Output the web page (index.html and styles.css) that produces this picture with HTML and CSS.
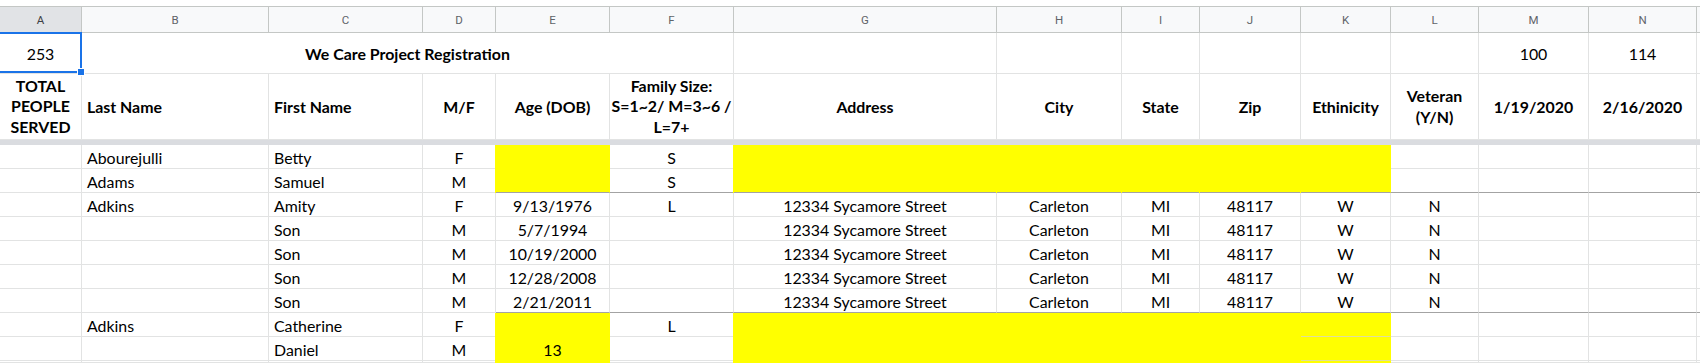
FILE: index.html
```html
<!DOCTYPE html>
<html>
<head>
<meta charset="utf-8">
<link rel="stylesheet" href="styles.css">
</head>
<body>
<div class="page">
  <div class="sheet">
    <!-- column headers -->
    <div class="h sel">A</div><div class="h">B</div><div class="h">C</div><div class="h">D</div><div class="h">E</div><div class="h">F</div><div class="h">G</div><div class="h">H</div><div class="h">I</div><div class="h">J</div><div class="h">K</div><div class="h">L</div><div class="h">M</div><div class="h">N</div><div class="h end"></div>

    <!-- row 1 -->
    <div class="c mid ctr a1">253<div class="selbox"><span class="handle"></span></div></div>
    <div class="c mid ctr b title">We Care Project Registration</div>
    <div class="c"></div><div class="c"></div><div class="c"></div><div class="c"></div><div class="c"></div><div class="c"></div>
    <div class="c mid ctr">100</div><div class="c mid ctr">114</div><div class="c end"></div>

    <!-- row 2 -->
    <div class="c mid ctr b wrap">TOTAL<br>PEOPLE<br>SERVED</div>
    <div class="c mid b">Last Name</div>
    <div class="c mid b">First Name</div>
    <div class="c mid ctr b">M/F</div>
    <div class="c mid ctr b">Age (DOB)</div>
    <div class="c mid ctr b wrap">Family Size:<br>S=1~2/ M=3~6 /<br>L=7+</div>
    <div class="c mid ctr b">Address</div>
    <div class="c mid ctr b">City</div>
    <div class="c mid ctr b">State</div>
    <div class="c mid ctr b">Zip</div>
    <div class="c mid ctr b">Ethinicity</div>
    <div class="c mid ctr b wrap">Veteran<br>(Y/N)</div>
    <div class="c mid ctr b">1/19/2020</div>
    <div class="c mid ctr b">2/16/2020</div>
    <div class="c end"></div>

    <div class="freeze"></div>

    <!-- row 3 -->
    <div class="c"></div><div class="c">Abourejulli</div><div class="c">Betty</div><div class="c ctr">F</div>
    <div class="c y"></div><div class="c ctr">S</div>
    <div class="c y"></div><div class="c y"></div><div class="c y"></div><div class="c y"></div><div class="c y"></div>
    <div class="c"></div><div class="c"></div><div class="c"></div><div class="c end"></div>

    <!-- row 4 -->
    <div class="c"></div><div class="c">Adams</div><div class="c">Samuel</div><div class="c ctr">M</div>
    <div class="c y dk"></div><div class="c ctr dk">S</div>
    <div class="c y dk"></div><div class="c y dk"></div><div class="c y dk"></div><div class="c y dk"></div><div class="c y dk"></div>
    <div class="c dk"></div><div class="c dk"></div><div class="c dk"></div><div class="c end dk"></div>

    <!-- row 5 -->
    <div class="c"></div><div class="c">Adkins</div><div class="c">Amity</div><div class="c ctr">F</div>
    <div class="c ctr">9/13/1976</div><div class="c ctr">L</div>
    <div class="c ctr">12334 Sycamore Street</div><div class="c ctr">Carleton</div><div class="c ctr">MI</div><div class="c ctr">48117</div><div class="c ctr">W</div>
    <div class="c ctr">N</div><div class="c"></div><div class="c"></div><div class="c end"></div>

    <!-- row 6 -->
    <div class="c"></div><div class="c"></div><div class="c">Son</div><div class="c ctr">M</div>
    <div class="c ctr">5/7/1994</div><div class="c"></div>
    <div class="c ctr">12334 Sycamore Street</div><div class="c ctr">Carleton</div><div class="c ctr">MI</div><div class="c ctr">48117</div><div class="c ctr">W</div>
    <div class="c ctr">N</div><div class="c"></div><div class="c"></div><div class="c end"></div>

    <!-- row 7 -->
    <div class="c"></div><div class="c"></div><div class="c">Son</div><div class="c ctr">M</div>
    <div class="c ctr">10/19/2000</div><div class="c"></div>
    <div class="c ctr">12334 Sycamore Street</div><div class="c ctr">Carleton</div><div class="c ctr">MI</div><div class="c ctr">48117</div><div class="c ctr">W</div>
    <div class="c ctr">N</div><div class="c"></div><div class="c"></div><div class="c end"></div>

    <!-- row 8 -->
    <div class="c"></div><div class="c"></div><div class="c">Son</div><div class="c ctr">M</div>
    <div class="c ctr">12/28/2008</div><div class="c"></div>
    <div class="c ctr">12334 Sycamore Street</div><div class="c ctr">Carleton</div><div class="c ctr">MI</div><div class="c ctr">48117</div><div class="c ctr">W</div>
    <div class="c ctr">N</div><div class="c"></div><div class="c"></div><div class="c end"></div>

    <!-- row 9 -->
    <div class="c"></div><div class="c"></div><div class="c">Son</div><div class="c ctr">M</div>
    <div class="c ctr dk">2/21/2011</div><div class="c dk"></div>
    <div class="c ctr dk">12334 Sycamore Street</div><div class="c ctr dk">Carleton</div><div class="c ctr dk">MI</div><div class="c ctr dk">48117</div><div class="c ctr dk">W</div>
    <div class="c ctr dk">N</div><div class="c dk"></div><div class="c dk"></div><div class="c end dk"></div>

    <!-- row 10 -->
    <div class="c"></div><div class="c">Adkins</div><div class="c">Catherine</div><div class="c ctr">F</div>
    <div class="c y"></div><div class="c ctr">L</div>
    <div class="c y"></div><div class="c y"></div><div class="c y"></div><div class="c y"></div><div class="c y ky"></div>
    <div class="c"></div><div class="c"></div><div class="c"></div><div class="c end"></div>

    <!-- row 11 -->
    <div class="c"></div><div class="c"></div><div class="c">Daniel</div><div class="c ctr">M</div>
    <div class="c y ctr">13</div><div class="c"></div>
    <div class="c y"></div><div class="c y"></div><div class="c y"></div><div class="c y"></div><div class="c y ky"></div>
    <div class="c"></div><div class="c"></div><div class="c"></div><div class="c end"></div>

    <!-- row 12 -->
    <div class="c"></div><div class="c"></div><div class="c"></div><div class="c"></div>
    <div class="c y"></div><div class="c"></div>
    <div class="c y"></div><div class="c y"></div><div class="c y"></div><div class="c y"></div><div class="c y"></div>
    <div class="c"></div><div class="c"></div><div class="c"></div><div class="c end"></div>
  </div>
</div>
</body>
</html>
```
FILE: styles.css
```css
html, body {
  margin: 0;
  padding: 0;
  background: #ffffff;
}
body {
  width: 1700px;
  height: 364px;
  overflow: hidden;
}
.page {
  padding-top: 6px;
}
.sheet {
  display: grid;
  grid-template-columns: 82px 187px 154px 73px 114px 124px 263px 125px 78px 101px 90px 88px 110px 108px 3px;
  grid-template-rows: 27px 41px 66px 5px repeat(9, 24px);
  font-family: Lato, "Open Sans", sans-serif;
  font-size: 15.9px;
  color: #000000;
}
.h {
  box-sizing: border-box;
  background: #f8f9fa;
  border-top: 1px solid #c4c7c5;
  border-bottom: 1px solid #c4c7c5;
  border-right: 1px solid #c4c7c5;
  display: flex;
  align-items: center;
  justify-content: center;
  font-family: Roboto, "Liberation Sans", Arial, sans-serif;
  font-size: 11.5px;
  color: #5f6368;
}
.h.sel {
  background: #e1e3e6;
  color: #3c4043;
}
.h.end {
  border-right: none;
}
.c {
  box-sizing: border-box;
  border-right: 1px solid #e2e3e3;
  border-bottom: 1px solid #e2e3e3;
  display: flex;
  align-items: flex-end;
  padding: 0 5px 1px 5px;
  white-space: nowrap;
  overflow: hidden;
  line-height: 19px;
}
.c.end {
  border-right: none;
  padding: 0;
}
.ctr {
  justify-content: center;
  text-align: center;
}
.mid {
  align-items: center;
  padding-bottom: 0;
}
.b {
  font-weight: 700;
}
.wrap {
  line-height: 20.5px;
}
.title {
  grid-column: span 5;
}
.freeze {
  grid-column: 1 / -1;
  background: #dadce0;
}
.y {
  background: #ffff00;
  border-right-color: #ffff00;
  border-bottom-color: #ffff00;
  box-shadow: -1px 0 0 #ffff00;
}
.dk {
  border-bottom-color: #a3a3a3;
}
.ky {
  border-bottom-color: #dede9c;
}
.a1 {
  position: relative;
  overflow: visible;
}
.selbox {
  position: absolute;
  top: -1px;
  left: -2px;
  right: -1px;
  bottom: 0;
  border: 2px solid #1a73e8;
  pointer-events: none;
}
.handle {
  position: absolute;
  right: -5px;
  bottom: -5px;
  width: 6px;
  height: 6px;
  background: #1a73e8;
  border: 1px solid #ffffff;
}
```
